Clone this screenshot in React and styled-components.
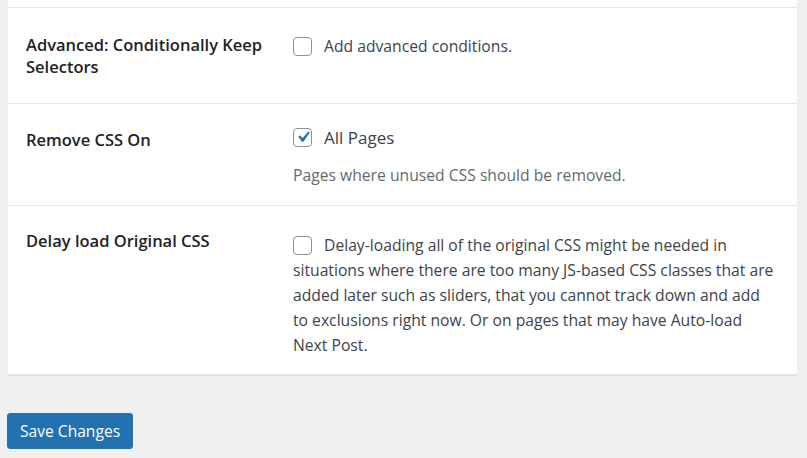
import styled, { createGlobalStyle } from "styled-components";

const GlobalStyle = createGlobalStyle`
  html, body {
    margin: 0;
    padding: 0;
    background: #f0f0f1;
  }
  body {
    font-family: "Open Sans", "Noto Sans", sans-serif;
    color: #3c434a;
  }
`;

const Page = styled.div`
  width: 807px;
  height: 458px;
  overflow: hidden;
  padding: 0 10px 0 8px;
  box-sizing: border-box;
`;

const Panel = styled.div`
  background: #fff;
  padding-top: 7px;
  box-shadow: 0 1px 1px rgba(0, 0, 0, 0.06);
  border-bottom: 1px solid #e2e4e7;
`;

const Row = styled.div`
  display: grid;
  grid-template-columns: 267px 1fr;
  padding: ${(p) => p.$pad || "26px 20px 26px 18px"};
  border-top: 1px solid #e5e5e5;
`;

const Label = styled.div`
  font-size: 16.5px;
  font-weight: 600;
  line-height: 22px;
  color: #1d2327;
  padding-top: ${(p) => p.$top || "0"};
`;

const Field = styled.div`
  font-size: 15.7px;
  line-height: 25px;
  color: #50575e;
  padding-top: ${(p) => p.$top || "0"};
`;

const Check = styled.label`
  display: block;
  font-size: ${(p) => (p.$big ? "17px" : "15.7px")};
  line-height: 25px;
  color: #3c434a;
`;

const Box = styled.span`
  display: inline-flex;
  align-items: center;
  justify-content: center;
  width: 17px;
  height: 17px;
  border: 1px solid #8c8f94;
  border-radius: 4px;
  background: #fff;
  vertical-align: -4px;
  margin-right: 12px;
  overflow: visible;
  svg {
    display: block;
    flex: none;
  }
`;

const Desc = styled.p`
  margin: ${(p) => p.$top || "10px"} 0 0;
  font-size: 15.7px;
  line-height: 25px;
  color: #646970;
`;

const Footer = styled.div`
  padding: 38px 0 0 0;
  margin-left: -1px;
`;

const SaveButton = styled.button`
  height: 36px;
  padding: 0 12px;
  border: 1px solid #2271b1;
  border-radius: 3px;
  background: #2271b1;
  color: #fff;
  font-family: "Open Sans", "Noto Sans", sans-serif;
  font-size: 15.6px;
  cursor: pointer;
`;

const Checkbox = ({ checked }) => (
  <Box>
    {checked && (
      <svg width="22" height="22" viewBox="0 0 20 20">
        <path
          d="M14.83 4.89l1.34.94-5.81 8.38H9.02L5.78 9.67l1.34-1.25 2.57 2.4z"
          fill="#2271b1"
        />
      </svg>
    )}
  </Box>
);

export default function App() {
  return (
    <Page>
      <GlobalStyle />
      <Panel>
        <Row $pad="26px 20px 25px 18px">
          <Label>
            Advanced: Conditionally Keep
            <br />
            Selectors
          </Label>
          <Field>
            <Check>
              <Checkbox />
              Add advanced conditions.
            </Check>
          </Field>
        </Row>
        <Row $pad="21px 20px 17px 18px">
          <Label $top="4px">Remove CSS On</Label>
          <Field>
            <Check $big>
              <Checkbox checked />
              All Pages
            </Check>
            <Desc $top="13px">Pages where unused CSS should be removed.</Desc>
          </Field>
        </Row>
        <Row $pad="24px 20px 16px 18px">
          <Label>Delay load Original CSS</Label>
          <Field $top="3px">
            <Check>
              <Checkbox />
              Delay-loading all of the original CSS might be needed in
              situations where there are too many JS-based CSS classes that are
              added later such as sliders, that you cannot track down and add to
              exclusions right now. Or on pages that may have Auto-load Next
              Post.
            </Check>
          </Field>
        </Row>
      </Panel>
      <Footer>
        <SaveButton>Save Changes</SaveButton>
      </Footer>
    </Page>
  );
}
